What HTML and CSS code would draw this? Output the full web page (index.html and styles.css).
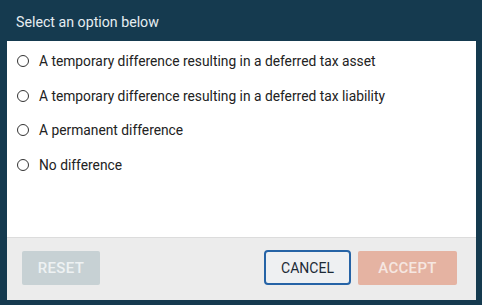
FILE: index.html
```html
<!DOCTYPE html>
<html>
<head>
<meta charset="utf-8">
<link rel="stylesheet" href="styles.css">
</head>
<body>
<div class="dialog">
  <div class="header">Select an option below</div>
  <div class="panel">
    <div class="options">
      <label class="option"><span class="radio"></span><span>A temporary difference resulting in a deferred tax asset</span></label>
      <label class="option"><span class="radio"></span><span>A temporary difference resulting in a deferred tax liability</span></label>
      <label class="option"><span class="radio"></span><span>A permanent difference</span></label>
      <label class="option"><span class="radio"></span><span>No difference</span></label>
    </div>
    <div class="footer">
      <button class="btn reset">RESET</button>
      <div class="spacer"></div>
      <button class="btn cancel">CANCEL</button>
      <button class="btn accept">ACCEPT</button>
    </div>
  </div>
</div>
</body>
</html>
```
FILE: styles.css
```css
html, body {
  margin: 0;
  padding: 0;
  background: #153a4f;
}
body {
  width: 482px;
  height: 305px;
  font-family: Roboto, "Liberation Sans", sans-serif;
}
.dialog {
  display: flex;
  flex-direction: column;
  height: 305px;
  padding: 0 6px 5px 7px;
  box-sizing: border-box;
}
.header {
  height: 41px;
  box-sizing: border-box;
  padding: 14px 0 0 9px;
  color: #e6edf1;
  font-size: 14.2px;
}
.panel {
  flex: 1;
  display: flex;
  flex-direction: column;
  background: #fff;
}
.options {
  flex: 1;
  padding-top: 3px;
  display: flex;
  flex-direction: column;
}
.option {
  display: flex;
  align-items: center;
  height: 34.5px;
  padding-left: 10px;
  font-size: 13.8px;
  color: #222;
}
.radio {
  width: 10px;
  height: 10px;
  border: 1.3px solid #333;
  border-radius: 50%;
  margin-right: 10px;
  flex: none;
}
.footer {
  height: 63px;
  box-sizing: border-box;
  background: #ececec;
  border-top: 1px solid #dcdcdc;
  display: flex;
  align-items: flex-start;
  padding: 13px 19px 0 15px;
  gap: 7px;
}
.spacer { flex: 1; }
.btn {
  height: 34px;
  border: none;
  font-family: Roboto, "Liberation Sans", sans-serif;
  font-size: 15px;
  font-weight: 500;
  letter-spacing: 0.3px;
  border-radius: 2px;
}
.reset {
  width: 78px;
  background: #c7d1d4;
  color: #eef2f3;
}
.cancel {
  width: 87px;
  height: 35px;
  margin-top: -1px;
  background: #eef0f2;
  border: 2px solid #2563a6;
  border-radius: 4px;
  color: #1c2a36;
  font-size: 14px;
  font-weight: 400;
  letter-spacing: 0;
}
.accept {
  width: 99px;
  background: #e5b3a2;
  color: #f6e7e1;
}
```
